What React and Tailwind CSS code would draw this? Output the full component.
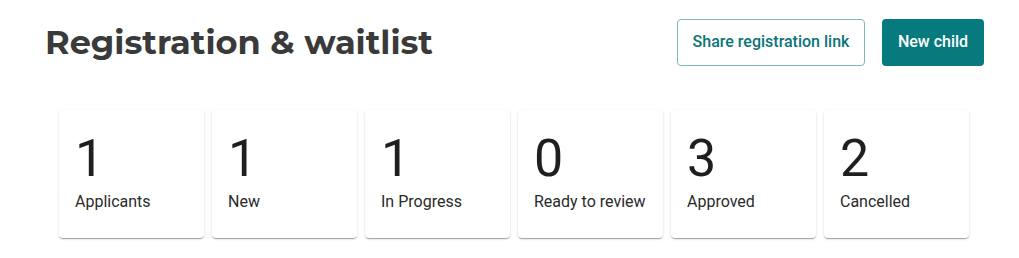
import React from "react";

const stats = [
  { value: 1, label: "Applicants" },
  { value: 1, label: "New" },
  { value: 1, label: "In Progress" },
  { value: 0, label: "Ready to review" },
  { value: 3, label: "Approved" },
  { value: 2, label: "Cancelled" },
];

const StatCard = ({ value, label }) => (
  <div className="w-[145px] h-[128px] bg-white rounded-[4px] shadow-[0_2px_1px_-1px_rgba(0,0,0,0.2),0_1px_1px_0_rgba(0,0,0,0.14),0_1px_3px_0_rgba(0,0,0,0.12)] px-4 pt-[19px]">
    <div className="text-[52px] leading-[60px] text-[#1f1f1f] font-normal">{value}</div>
    <div className="mt-[3px] text-[16px] leading-5 text-[#2a2a2a]">{label}</div>
  </div>
);

export default function App() {
  return (
    <div className="w-[1019px] h-[258px] bg-white font-['Roboto',sans-serif]">
      {/* Header */}
      <div className="flex items-center justify-between pl-[45px] pr-[35px] pt-[17px]">
        <h1 className="font-['Montserrat','Inter',sans-serif] font-bold text-[33.6px] text-[#3a3a3a]">
          Registration &amp; waitlist
        </h1>
        <div className="flex gap-[17px]">
          <button className="h-[47px] w-[188px] rounded-[4px] border border-[#7fb8bb] text-[#0b7478] text-[16px] font-medium bg-white">
            Share registration link
          </button>
          <button className="h-[47px] w-[102px] rounded-[4px] bg-[#077a7e] text-white text-[16px] font-medium">
            New child
          </button>
        </div>
      </div>

      {/* Stats */}
      <div className="flex gap-2 pl-[59px] pt-[43px]">
        {stats.map((s) => (
          <StatCard key={s.label} value={s.value} label={s.label} />
        ))}
      </div>
    </div>
  );
}
